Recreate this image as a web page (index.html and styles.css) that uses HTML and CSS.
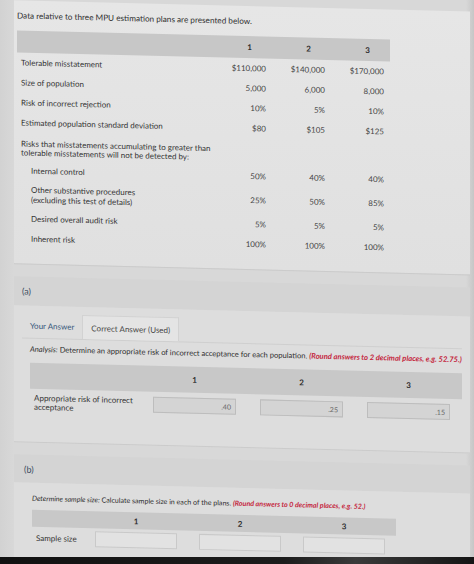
FILE: index.html
```
<!DOCTYPE html>
<html lang="en">
<head>
<meta charset="utf-8">
<title>MPU estimation plans</title>
<link rel="stylesheet" href="styles.css">
</head>
<body>
<div class="page">
  <section class="intro">
    <p class="title">Data relative to three MPU estimation plans are presented below.</p>
    <div class="data">
      <div class="data-head"><span></span><span>1</span><span>2</span><span>3</span></div>
      <div class="row"><span class="label">Tolerable misstatement</span><span class="v">$110,000</span><span class="v">$140,000</span><span class="v">$170,000</span></div>
      <div class="row"><span class="label">Size of population</span><span class="v">5,000</span><span class="v">6,000</span><span class="v">8,000</span></div>
      <div class="row"><span class="label">Risk of incorrect rejection</span><span class="v">10%</span><span class="v">5%</span><span class="v">10%</span></div>
      <div class="row"><span class="label">Estimated population standard deviation</span><span class="v">$80</span><span class="v">$105</span><span class="v">$125</span></div>
      <div class="row row-note"><span class="label wide">Risks that misstatements accumulating to greater than tolerable misstatements will not be detected by:</span></div>
      <div class="row"><span class="label sub">Internal control</span><span class="v">50%</span><span class="v">40%</span><span class="v">40%</span></div>
      <div class="row row-tall"><span class="label sub">Other substantive procedures<br>(excluding this test of details)</span><span class="v">25%</span><span class="v">50%</span><span class="v">85%</span></div>
      <div class="row"><span class="label sub">Desired overall audit risk</span><span class="v">5%</span><span class="v">5%</span><span class="v">5%</span></div>
      <div class="row"><span class="label sub">Inherent risk</span><span class="v">100%</span><span class="v">100%</span><span class="v">100%</span></div>
    </div>
  </section>

  <section class="part part-a">
    <div class="part-head">(a)</div>
    <div class="part-body">
      <div class="tabs">
        <span class="tab tab-mine">Your Answer</span>
        <span class="tab tab-active">Correct Answer (Used)</span>
      </div>
      <p class="instr"><em>Analysis:</em> Determine an appropriate risk of incorrect acceptance for each population. <strong class="hint">(Round answers to 2 decimal places, e.g. 52.75.)</strong></p>
      <div class="ans">
        <div class="ans-head"><span></span><span>1</span><span>2</span><span>3</span></div>
        <div class="ans-row">
          <span class="ans-label">Appropriate risk of incorrect acceptance</span>
          <span class="field filled">.40</span>
          <span class="field filled">.25</span>
          <span class="field filled">.15</span>
        </div>
      </div>
    </div>
  </section>

  <section class="part part-b">
    <div class="part-head">(b)</div>
    <div class="part-body">
      <p class="instr"><em>Determine sample size:</em> Calculate sample size in each of the plans. <strong class="hint">(Round answers to 0 decimal places, e.g. 52.)</strong></p>
      <div class="ans ans-b">
        <div class="ans-head"><span></span><span>1</span><span>2</span><span>3</span></div>
        <div class="ans-row">
          <span class="ans-label">Sample size</span>
          <span class="field"></span>
          <span class="field"></span>
          <span class="field"></span>
        </div>
      </div>
    </div>
  </section>
</div>
<div class="bezel"></div>
</body>
</html>
```

FILE: styles.css
```
* { box-sizing: border-box; }

html, body {
  margin: 0;
  height: 564px;
  overflow: hidden;
}

body {
  background: linear-gradient(90deg, #d2d2d2 0, #d8d8d8 14px, #d8d8d8 466px, #c6c6c6 474px);
  font-family: Lato, "Open Sans", sans-serif;
  color: #333;
  font-size: 8px;
}

.page {
  width: 470px;
  padding-left: 14px;
  transform: skewY(1.4deg);
  transform-origin: 0 0;
}

/* intro card */
.intro {
  background: linear-gradient(180deg, #e6e6e6, #e0e0e0);
  padding: 10px 0 15px 3px;
  border-bottom: 1px solid #cbcbcb;
}

.title {
  margin: 0 0 10px;
  font-size: 8.2px;
  line-height: 10px;
  color: #2e2e2e;
}

.data { width: 373px; }

.data-head,
.row {
  display: grid;
  grid-template-columns: 196px repeat(3, 59px);
  align-items: center;
}

.data-head {
  height: 22px;
  background: #c7c7c7;
}

.data-head span {
  text-align: right;
  padding-right: 20px;
  font-weight: 700;
  font-size: 8px;
  color: #2e2e2e;
}

.row {
  min-height: 20px;
}

.row .label {
  padding-left: 4px;
  line-height: 9px;
  color: #333;
}

.row .label.sub { padding-left: 14px; line-height: 10px; }

.row .label.wide {
  grid-column: 1 / span 3;
  width: 236px;
  padding-right: 10px;
}

.row-note {
  padding: 7px 0 3px;
}

.row-tall { min-height: 28px; }

.row .v {
  text-align: right;
  padding-right: 6px;
  color: #444;
}

/* parts */
.part { margin-top: 12px; }

.part-head {
  display: flex;
  align-items: center;
  height: 29px;
  padding-left: 8px;
  background: #d4d4d4;
  font-size: 9px;
  color: #3a4a5e;
}

.part-body {
  background: #dddddd;
  padding: 8px 8px 30px;
  border-bottom: 1px solid #cbcbcb;
}

.tabs {
  display: flex;
  height: 25px;
  border-bottom: 1px solid #cfcfcf;
}

.tab {
  display: flex;
  align-items: center;
  padding: 0 8px;
  font-size: 8px;
}

.tab-mine { color: #34557a; }

.tab-active {
  background: #e4e4e4;
  border: 1px solid #d2d2d2;
  border-bottom: none;
  color: #444;
}

.instr {
  margin: 6px 0 0 8px;
  font-size: 7.6px;
  line-height: 9px;
  color: #2e2e2e;
  white-space: nowrap;
}

.hint {
  color: #c4233b;
  font-style: italic;
  font-weight: 700;
}

.ans {
  margin: 9px 0 0 8px;
  width: 432px;
}

.ans-head,
.ans-row {
  display: grid;
  grid-template-columns: 111px repeat(3, 107px);
}

.ans-head {
  height: 26px;
  align-items: center;
  background: #c8c8c8;
}

.ans-head span {
  text-align: center;
  font-weight: 700;
  color: #2e2e2e;
}

.ans-row {
  padding-top: 5px;
  align-items: start;
}

.ans-label {
  padding-left: 4px;
  line-height: 9px;
  color: #333;
}

.field {
  justify-self: center;
  width: 83px;
  height: 16px;
  padding-right: 4px;
  background: #d4d4d4;
  border: 1px solid #bdbdbd;
  text-align: right;
  font-size: 7px;
  line-height: 14px;
  color: #666;
}

/* part b */
.part-b .part-head {
  height: 28px;
  padding-left: 10px;
}

.part-b .part-body {
  padding: 11px 8px 12px;
  border-bottom: none;
}

.part-b .instr {
  margin: 0 0 0 10px;
  font-size: 7.1px;
}

.ans-b {
  margin: 7px 0 0 10px;
  width: 364px;
}

.ans-b .ans-head,
.ans-b .ans-row {
  grid-template-columns: 52px repeat(3, 104px);
}

.ans-b .ans-head { height: 17px; }

.ans-b .ans-row {
  padding-top: 3px;
  align-items: center;
}

.ans-b .field {
  width: 82px;
  background: #e2e2e2;
  border-color: #c9c9c9;
}

/* monitor edge at the bottom of the photo */
.bezel {
  position: fixed;
  left: 0;
  right: 0;
  bottom: 0;
  height: 7px;
  background: linear-gradient(90deg, #111 0, #1c1c1c 60%, #3a3a3a 75%, #151515 100%);
}
```
